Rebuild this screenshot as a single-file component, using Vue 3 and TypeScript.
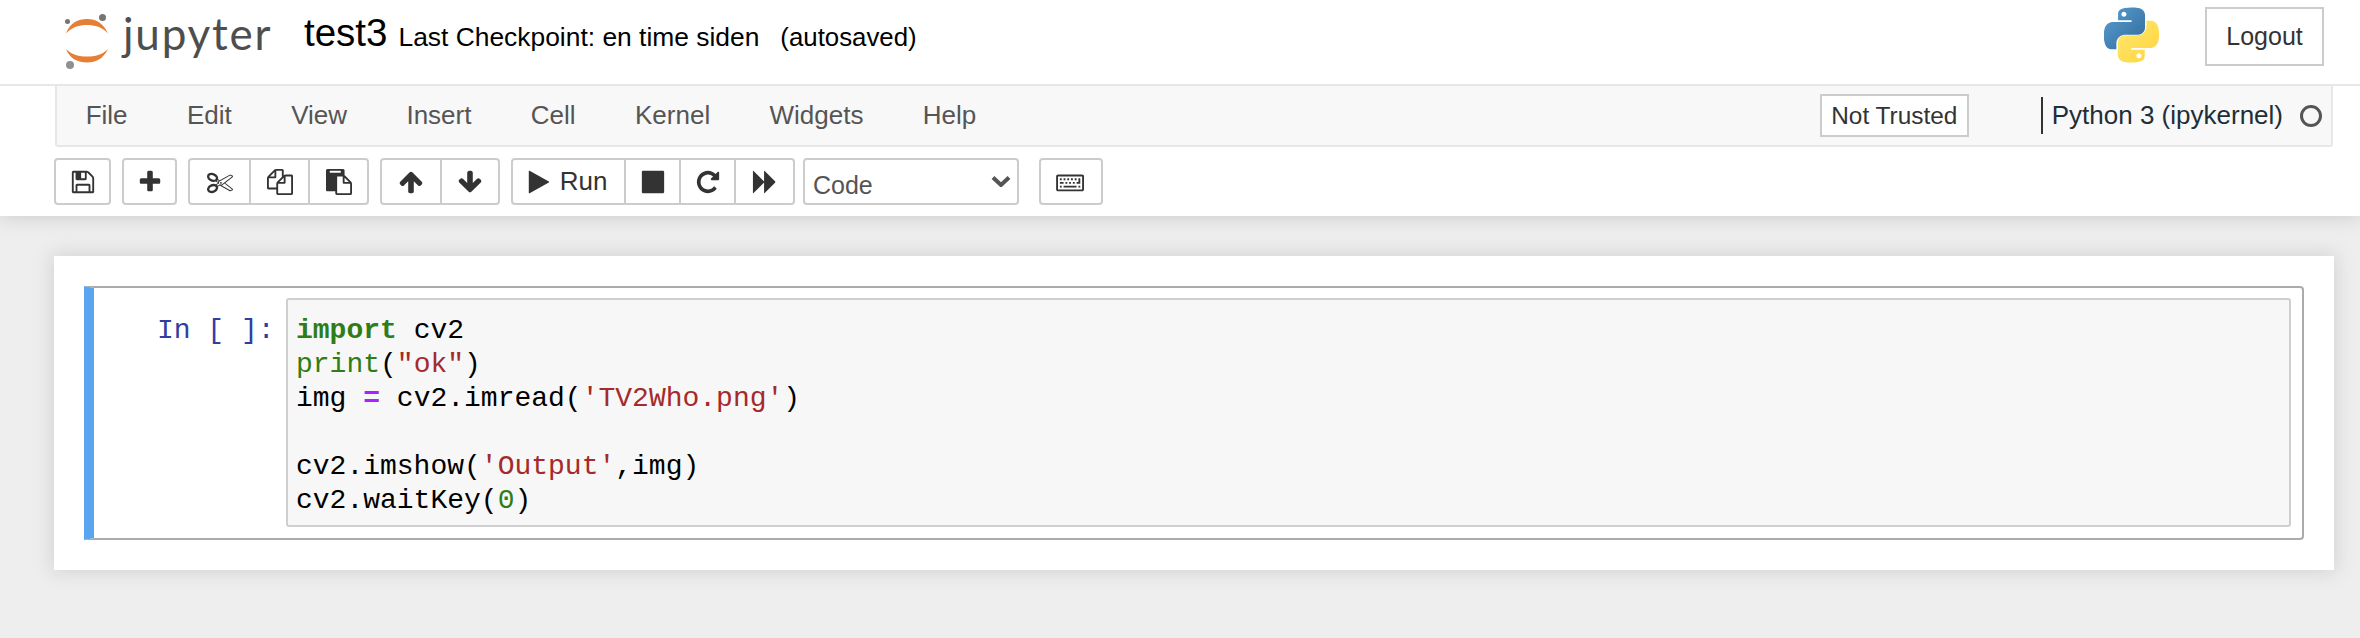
<script setup lang="ts">
const menus: string[] = ['File', 'Edit', 'View', 'Insert', 'Cell', 'Kernel', 'Widgets', 'Help']

const icons: Record<string, string> = {
  save: 'M512 1536h768v-384h-768v384zm896 0h128v-896q0-14-10-38.5t-20-34.5l-281-281q-10-10-34-20t-39-10v416q0 40-28 68t-68 28h-576q-40 0-68-28t-28-68v-416h-128v1280h128v-416q0-40 28-68t68-28h832q40 0 68 28t28 68v416zm-384-928v-320q0-13-9.5-22.5t-22.5-9.5h-192q-13 0-22.5 9.5t-9.5 22.5v320q0 13 9.5 22.5t22.5 9.5h192q13 0 22.5-9.5t9.5-22.5zm640 32v928q0 40-28 68t-68 28h-1344q-40 0-68-28t-28-68v-1344q0-40 28-68t68-28h928q40 0 88 20t76 48l280 280q28 28 48 76t20 88z',
  plus: 'M1600 736v192q0 40-28 68t-68 28h-416v416q0 40-28 68t-68 28h-192q-40 0-68-28t-28-68v-416h-416q-40 0-68-28t-28-68v-192q0-40 28-68t68-28h416v-416q0-40 28-68t68-28h192q40 0 68 28t28 68v416h416q40 0 68 28t28 68z',
  cut: 'M960 896q26 0 45 19t19 45-19 45-45 19-45-19-19-45 19-45 45-19zm300 64l507 398q28 20 25 56-5 35-35 51l-128 64q-13 7-29 7-17 0-31-8l-690-387-110 66q-8 4-12 5 14 49 10 97-7 77-56 147.5t-132 123.5q-132 84-277 84-136 0-222-78-90-84-79-207 7-76 56-147t131-124q132-84 278-84 83 0 151 31 9-13 22-22l122-73-122-73q-13-9-22-22-68 31-151 31-146 0-278-84-82-53-131-124t-56-147q-5-59 15.5-113t63.5-93q85-79 222-79 145 0 277 84 83 52 132 123t56 148q4 48-10 97 4 1 12 5l110 66 690-387q14-8 31-8 16 0 29 7l128 64q30 16 35 51 3 36-25 56zm-681-260q46-42 21-108t-106-117q-92-59-192-59-74 0-113 36-46 42-21 108t106 117q92 59 192 59 74 0 113-36zm-85 745q81-51 106-117t-21-108q-39-36-113-36-100 0-192 59-81 51-106 117t21 108q39 36 113 36 100 0 192-59zm178-613l96 58v-11q0-36 33-56l14-8-79-47-26 26q-3 3-10 11t-12 12q-2 2-4 3.5t-3 2.5zm224 224l96 32 736-576-128-64-768 431v113l-160 96 9 8q2 2 7 6 4 4 11 12t11 12l26 26zm704 416l128-64-520-408-177 138q-2 3-13 7z',
  copy: 'M1696 384q40 0 68 28t28 68v1216q0 40-28 68t-68 28h-960q-40 0-68-28t-28-68v-288h-544q-40 0-68-28t-28-68v-672q0-40 20-88t48-76l408-408q28-28 76-48t88-20h416q40 0 68 28t28 68v328q68-40 128-40h416zm-544 213l-299 299h299v-299zm-640-384l-299 299h299v-299zm196 647l316-316v-416h-384v416q0 40-28 68t-68 28h-416v640h512v-256q0-40 20-88t48-76zm956 804v-1152h-384v416q0 40-28 68t-68 28h-416v640h896z',
  paste: 'M768 1664h896v-640h-416q-40 0-68-28t-28-68v-416h-384v1152zm256-1440v-64q0-13-9.5-22.5t-22.5-9.5h-704q-13 0-22.5 9.5t-9.5 22.5v64q0 13 9.5 22.5t22.5 9.5h704q13 0 22.5-9.5t9.5-22.5zm256 672h299l-299-299v299zm512 128v672q0 40-28 68t-68 28h-960q-40 0-68-28t-28-68v-160h-544q-40 0-68-28t-28-68v-1344q0-40 28-68t68-28h1088q40 0 68 28t28 68v328q21 13 36 28l408 408q28 28 48 76t20 88z',
  up: 'M1675 971q0 51-37 90l-75 75q-38 38-91 38-54 0-90-38l-294-293v704q0 52-37.5 84.5t-90.5 32.5h-128q-53 0-90.5-32.5t-37.5-84.5v-704l-294 293q-36 38-90 38t-90-38l-75-75q-38-38-38-90 0-53 38-91l651-651q35-37 90-37 54 0 91 37l651 651q37 39 37 91z',
  down: 'M1675 832q0 53-37 90l-651 652q-39 37-91 37-53 0-90-37l-651-652q-38-36-38-90 0-53 38-91l74-75q39-37 91-37 53 0 90 37l294 294v-704q0-52 38-90t90-38h128q52 0 90 38t38 90v704l294-294q37-37 90-37 52 0 91 37l75 75q37 39 37 91z',
  play: 'M1576 927l-1328 738q-23 13-39.5 3t-16.5-36v-1472q0-26 16.5-36t39.5 3l1328 738q23 13 23 31t-23 31z',
  stop: 'M1664 192v1408q0 26-19 45t-45 19h-1408q-26 0-45-19t-19-45v-1408q0-26 19-45t45-19h1408q26 0 45 19t19 45z',
  repeat: 'M1664 256v448q0 26-19 45t-45 19h-448q-42 0-59-40-17-39 14-69l138-138q-148-137-349-137-104 0-198.5 40.5t-163.5 109.5-109.5 163.5-40.5 198.5 40.5 198.5 109.5 163.5 163.5 109.5 198.5 40.5q119 0 225-52t179-147q7-10 23-12 15 0 25 9l137 138q9 8 9.5 20.5t-7.5 22.5q-109 132-264 204.5t-327 72.5q-156 0-298-61t-245-164-164-245-61-298 61-298 164-245 245-164 298-61q147 0 284.5 55.5t244.5 156.5l130-129q29-31 70-14 39 17 39 59z',
  forward: 'M109 1651q-19 19-32 13t-13-32v-1472q0-26 13-32t32 13l710 710q9 9 13 19v-710q0-26 13-32t32 13l710 710q19 19 19 45t-19 45l-710 710q-19 19-32 13t-13-32v-710q-4 10-13 19z',
  keyboard: 'M384 1168v96q0 16-16 16h-96q-16 0-16-16v-96q0-16 16-16h96q16 0 16 16zm128-256v96q0 16-16 16h-224q-16 0-16-16v-96q0-16 16-16h224q16 0 16 16zm-128-256v96q0 16-16 16h-96q-16 0-16-16v-96q0-16 16-16h96q16 0 16 16zm1024 512v96q0 16-16 16h-864q-16 0-16-16v-96q0-16 16-16h864q16 0 16 16zm-640-256v96q0 16-16 16h-96q-16 0-16-16v-96q0-16 16-16h96q16 0 16 16zm-128-256v96q0 16-16 16h-96q-16 0-16-16v-96q0-16 16-16h96q16 0 16 16zm384 256v96q0 16-16 16h-96q-16 0-16-16v-96q0-16 16-16h96q16 0 16 16zm-128-256v96q0 16-16 16h-96q-16 0-16-16v-96q0-16 16-16h96q16 0 16 16zm384 256v96q0 16-16 16h-96q-16 0-16-16v-96q0-16 16-16h96q16 0 16 16zm384 256v96q0 16-16 16h-96q-16 0-16-16v-96q0-16 16-16h96q16 0 16 16zm-512-512v96q0 16-16 16h-96q-16 0-16-16v-96q0-16 16-16h96q16 0 16 16zm256 0v96q0 16-16 16h-96q-16 0-16-16v-96q0-16 16-16h96q16 0 16 16zm256 0v352q0 16-16 16h-224q-16 0-16-16v-96q0-16 16-16h112v-240q0-16 16-16h96q16 0 16 16zm128 752v-896h-1664v896h1664zm128-896v896q0 53-37.5 90.5t-90.5 37.5h-1664q-53 0-90.5-37.5t-37.5-90.5v-896q0-53 37.5-90.5t90.5-37.5h1664q53 0 90.5 37.5t37.5 90.5z',
}

interface Btn { icon: string; cls: string; label?: string }
const groups: Btn[][] = [
  [{ icon: 'save', cls: 'w57' }],
  [{ icon: 'plus', cls: 'w55' }],
  [{ icon: 'cut', cls: 'w60' }, { icon: 'copy', cls: 'w60' }, { icon: 'paste', cls: 'w60' }],
  [{ icon: 'up', cls: 'w59' }, { icon: 'down', cls: 'w59' }],
  [{ icon: 'play', cls: 'w112', label: 'Run' }, { icon: 'stop', cls: 'w56' }, { icon: 'repeat', cls: 'w56' }, { icon: 'forward', cls: 'w60' }],
]

interface Tok { t: string; c: string }
const code: Tok[][] = [
  [{ t: 'import', c: 'kw' }, { t: ' cv2', c: 'tx' }],
  [{ t: 'print', c: 'bi' }, { t: '(', c: 'tx' }, { t: '"ok"', c: 'st' }, { t: ')', c: 'tx' }],
  [{ t: 'img ', c: 'tx' }, { t: '=', c: 'op' }, { t: ' cv2.imread(', c: 'tx' }, { t: "'TV2Who.png'", c: 'st' }, { t: ')', c: 'tx' }],
  [],
  [{ t: 'cv2.imshow(', c: 'tx' }, { t: "'Output'", c: 'st' }, { t: ',img)', c: 'tx' }],
  [{ t: 'cv2.waitKey(', c: 'tx' }, { t: '0', c: 'nu' }, { t: ')', c: 'tx' }],
]

const snake =
  'M54.9.1C50.3.1 45.9.5 42 1.2 30.5 3.2 28.4 7.5 28.4 15.3V25.7H55.6V29.1H18.2C10.3 29.1 3.4 33.9 1.2 42.9-1.3 53.3-1.4 59.8 1.2 70.6 3.1 78.7 7.7 84.4 15.6 84.4H25V71.9C25 62.9 32.8 54.9 42 54.9H69.2C76.7 54.9 82.8 48.7 82.8 41.1V15.3C82.8 7.9 76.5 2.4 69.2 1.2 64.5.4 59.6.1 54.9.1ZM40.2 8.4C43 8.4 45.3 10.7 45.3 13.6 45.3 16.4 43 18.7 40.2 18.7 37.4 18.7 35.1 16.4 35.1 13.6 35.1 10.7 37.4 8.4 40.2 8.4Z'
</script>

<template>
  <div class="page">
    <div class="top">
      <header class="header">
        <div class="brand">
          <svg class="jlogo" viewBox="0 0 54 60" width="54" height="60" aria-hidden="true">
            <path d="M7 22.5C11 12 19 8 28 8S44 12 49 22.5C43 16 36 14 28 14S13 16 7 22.5Z" fill="#e67e35" />
            <path d="M7 38C11 48 19 51.500 28 51.500S44 48 49 38C43 44 36 45.500 28 45.500S13 44 7 38Z" fill="#e67e35" />
            <circle cx="43.500" cy="6.500" r="3.500" fill="#757575" />
            <circle cx="8.500" cy="10.500" r="2.500" fill="#757575" />
            <circle cx="11" cy="54" r="4" fill="#909090" />
          </svg>
          <span class="jname">jupyter</span>
        </div>
        <span class="title">test3</span>
        <span class="checkpoint">Last Checkpoint: en time siden</span>
        <span class="autosaved">(autosaved)</span>
        <svg class="pylogo" viewBox="0 0 111 111" width="55" height="56" aria-hidden="true">
          <defs>
            <linearGradient id="pyb" x1="0" y1="0" x2="1" y2="1">
              <stop offset="0" stop-color="#5a9fd4" />
              <stop offset="1" stop-color="#306998" />
            </linearGradient>
            <linearGradient id="pyy" x1="0" y1="0" x2="1" y2="1">
              <stop offset="0" stop-color="#ffd43b" />
              <stop offset="1" stop-color="#ffe873" />
            </linearGradient>
          </defs>
          <path :d="snake" fill="url(#pyb)" />
          <path :d="snake" fill="url(#pyy)" transform="rotate(180 55.300 55.500)" />
        </svg>
        <div class="logout">Logout</div>
      </header>

      <nav class="menubar">
        <span v-for="m in menus" :key="m" class="menu">{{ m }}</span>
        <span class="trusted">Not Trusted</span>
        <span class="kernel">Python 3 (ipykernel)</span>
        <span class="dot"></span>
      </nav>

      <div class="toolbar">
        <div v-for="(g, i) in groups" :key="i" class="group">
          <div v-for="b in g" :key="b.icon" class="btn" :class="b.cls">
            <svg class="ico" viewBox="0 0 1792 1792" aria-hidden="true"><path :d="icons[b.icon]" /></svg>
            <span v-if="b.label" class="btn-label">{{ b.label }}</span>
          </div>
        </div>
        <div class="select">
          <span>Code</span>
          <svg class="chev" viewBox="0 0 20 12" aria-hidden="true"><path d="M2 2.500 10 10l8-7.500" /></svg>
        </div>
        <div class="group kbd">
          <div class="btn w64">
            <svg class="ico-kb" viewBox="0 0 2048 1792" aria-hidden="true"><path :d="icons.keyboard" /></svg>
          </div>
        </div>
      </div>
    </div>

    <main class="panel">
      <div class="cell">
        <div class="prompt">In [ ]:</div>
        <div class="input">
          <div v-for="(line, n) in code" :key="n" class="line">
            <span v-for="(tok, k) in line" :key="k" :class="tok.c">{{ tok.t }}</span>
          </div>
        </div>
      </div>
    </main>
  </div>
</template>

<style>
html, body { margin: 0; background: #eeeeee; }
</style>

<style scoped>
.page {
  width: 2360px;
  height: 638px;
  overflow: hidden;
  background: #eeeeee;
  font-family: "Liberation Sans", Arial, sans-serif;
  color: #333;
}
.top {
  background: #fff;
  height: 216px;
  box-shadow: 0 0 18px rgba(87, 87, 87, 0.25);
  position: relative;
}
.header {
  height: 84px;
  border-bottom: 2px solid #e7e7e7;
  display: flex;
  align-items: center;
  padding-left: 59px;
  box-sizing: content-box;
}
.brand { display: flex; align-items: center; width: 245px; }
.jlogo { flex: none; margin-top: -2px; }
.jname {
  font-family: "Lato", sans-serif;
  font-size: 44px;
  font-weight: 400;
  letter-spacing: 1.8px;
  color: #4e4e4e;
  margin-left: 10px;
  margin-top: -18px;
}
.title { font-size: 38.5px; color: #000; margin-top: -19px; }
.checkpoint { font-size: 26.4px; color: #000; margin-left: 11px; margin-top: -9px; }
.autosaved { font-size: 25.8px; color: #000; margin-left: 21px; margin-top: -9px; }
.pylogo { margin-left: auto; flex: none; margin-top: -14px; }
.logout {
  margin-left: 46px;
  margin-right: 36px;
  width: 119px;
  height: 59px;
  box-sizing: border-box;
  border: 2px solid #ccc;
  margin-top: -12px;
  display: flex;
  align-items: center;
  justify-content: center;
  font-size: 25px;
}
.menubar {
  margin: 0 27px 0 55px;
  height: 61px;
  box-sizing: border-box;
  background: #f8f8f8;
  border: solid #e7e7e7;
  border-width: 0 2px 2px;
  border-radius: 0 0 3px 3px;
  display: flex;
  align-items: center;
  padding-right: 9px;
}
.menu { font-size: 26px; color: #555; padding: 0 29.7px; }
.menu:first-child { margin-left: -1px; }
.trusted {
  margin-left: auto;
  width: 149px;
  height: 43px;
  box-sizing: border-box;
  background: #fff;
  border: 2px solid #ccc;
  display: flex;
  align-items: center;
  justify-content: center;
  font-size: 24.4px;
  color: #333;
}
.kernel {
  margin-left: 72px;
  padding-left: 9px;
  border-left: 2px solid #333;
  height: 37px;
  line-height: 37px;
  font-size: 26px;
  color: #212e36;
}
.dot {
  margin-left: 17px;
  width: 22px;
  height: 22px;
  box-sizing: border-box;
  border: 3px solid #555;
  border-radius: 50%;
}
.toolbar {
  display: flex;
  align-items: flex-start;
  padding: 11px 0 0 54px;
  gap: 11px;
}
.group {
  display: flex;
  height: 47px;
  box-sizing: border-box;
  border: 2px solid #ccc;
  border-radius: 4px;
  background: #fff;
}
.btn {
  display: flex;
  align-items: center;
  justify-content: center;
  box-sizing: border-box;
  border-left: 2px solid #ccc;
  color: #333;
}
.btn:first-child { border-left: 0; }
.w55 { width: 51px; }
.w57 { width: 53px; }
.w60 { width: 59px; }
.w59 { width: 58px; }
.w112 { width: 111px; }
.w56 { width: 55px; }
.w64 { width: 60px; }
.ico { width: 26px; height: 26px; fill: #333; flex: none; }
.ico-kb { width: 30px; height: 26px; fill: #333; }
.btn-label { font-size: 26px; margin-left: 8px; }
.w112 .ico { margin-left: -4px; }
.select {
  margin-left: -3px;
  width: 216px;
  height: 47px;
  box-sizing: border-box;
  border: 2px solid #ccc;
  border-radius: 4px;
  background: #fff;
  display: flex;
  align-items: center;
  justify-content: space-between;
  padding: 8px 6px 0 8px;
  font-size: 25px;
  color: #555;
}
.chev { width: 20px; height: 12px; fill: none; stroke: #555; stroke-width: 4; margin-top: -10px; }
.kbd { margin-left: 9px; }
.panel {
  margin: 40px 26px 0 54px;
  height: 314px;
  box-sizing: border-box;
  background: #fff;
  padding: 30px;
  box-shadow: 0 0 18px 2px rgba(87, 87, 87, 0.18);
}
.cell {
  height: 254px;
  box-sizing: border-box;
  border: 2px solid #ababab;
  border-left: 10px solid #5aa5ef;
  border-radius: 0 4px 4px 0;
  display: flex;
  align-items: flex-start;
  padding: 10px 11px 0 0;
}
.prompt {
  width: 192px;
  flex: none;
  box-sizing: border-box;
  text-align: right;
  padding-right: 11.5px;
  font-family: "Liberation Mono", monospace;
  font-size: 28px;
  line-height: 34px;
  color: #303f9f;
  padding-top: 16px;
  white-space: pre;
}
.input {
  flex: 1;
  height: 229px;
  box-sizing: border-box;
  border: 2px solid #cfcfcf;
  border-radius: 3px;
  background: #f7f7f7;
  padding: 14px 8px 0;
  font-family: "Liberation Mono", monospace;
  font-size: 28px;
  line-height: 34px;
}
.line { height: 34px; white-space: pre; }
.tx { color: #000; }
.kw { color: #2e7d16; font-weight: 700; }
.bi { color: #2e7d16; }
.st { color: #a52a2a; }
.op { color: #aa22ff; font-weight: 700; }
.nu { color: #2e7d16; }
</style>
